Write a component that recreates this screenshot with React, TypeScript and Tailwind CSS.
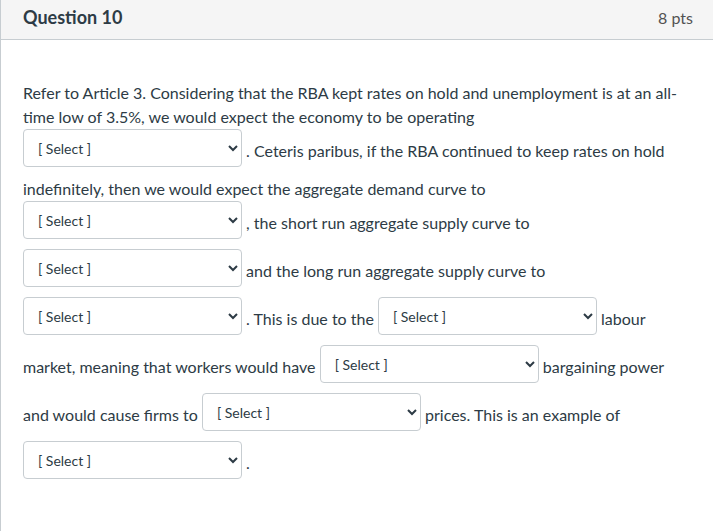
import type { ReactNode } from 'react';

const font = { fontFamily: 'Lato, "Noto Sans", sans-serif' };

function Dropdown() {
  return (
    <select
      defaultValue=""
      className="inline-block align-middle h-[38px] w-[219px] mt-0 mb-[10px] rounded-[4px] border border-[#c7cdd1] bg-white pl-[10px] pr-[6px] text-[14px] text-[#2d3b45]"
      style={font}
    >
      <option value="">[ Select ]</option>
    </select>
  );
}

function Para({ children }: { children: ReactNode }) {
  return <p className="text-[16px] leading-[24px] text-[#2d3b45]">{children}</p>;
}

export default function App() {
  return (
    <div className="w-full min-h-[531px] bg-white border-l border-[#c7cdd1]" style={font}>
      {/* Header */}
      <div className="flex items-center justify-between h-[40px] pb-[4px] bg-[#f5f5f5] border-b border-[#c7cdd1] pl-[22px] pr-[20px]">
        <h2 className="text-[18px] font-bold text-[#2d3b45]">Question 10</h2>
        <span className="text-[16px] text-[#525252]">8 pts</span>
      </div>

      {/* Body */}
      <div className="pt-[41px] pl-[22px] pr-[22px] pb-[40px]">
        <Para>
          Refer to Article 3. Considering that the RBA kept rates on hold and unemployment is at an all-time low of
          3.5%, we would expect the economy to be operating <Dropdown /> . Ceteris paribus, if the RBA continued to
          keep rates on hold indefinitely, then we would expect the aggregate demand curve to <Dropdown /> , the short
          run aggregate supply curve to <Dropdown /> and the long run aggregate supply curve to <Dropdown /> . This is
          due to the <Dropdown /> labour market, meaning that workers would have <Dropdown /> bargaining power and
          would cause firms to <Dropdown /> prices. This is an example of <Dropdown /> .
        </Para>
      </div>
    </div>
  );
}
